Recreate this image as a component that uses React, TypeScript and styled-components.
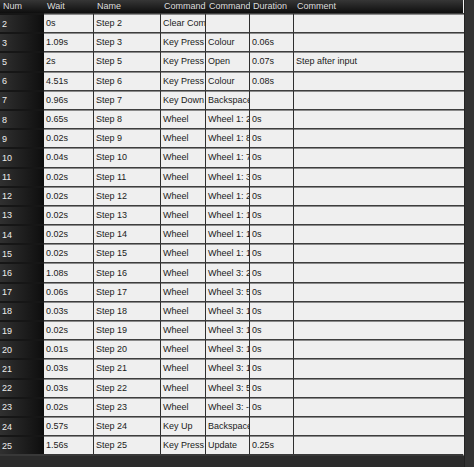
import React from 'react';
import styled, { createGlobalStyle } from 'styled-components';

const COLS = '44px 50px 67px 45px 44px 44px 170px';
const ROW_H = 19.2;

const GlobalStyle = createGlobalStyle`
  html, body {
    margin: 0;
    padding: 0;
    background: #2c2c2c;
  }
  body {
    font-family: 'Liberation Sans', Arial, sans-serif;
  }
`;

const Frame = styled.div`
  width: 474px;
  height: 467px;
  display: flex;
  background: #2b2b2b;
  overflow: hidden;
`;

const Table = styled.div`
  width: 464px;
  display: flex;
  flex-direction: column;
  border-right: 1px solid #f4f4f4;
  box-sizing: border-box;
  align-self: flex-start;
  border-bottom: 2px solid #383838;
`;

const Scroll = styled.div`
  flex: 1;
  background: #333;
  border-left: 1px solid #222;
`;

const HeaderRow = styled.div`
  display: grid;
  grid-template-columns: ${COLS};
  height: 13px;
  background: linear-gradient(#363636, #0e0e0e);
`;

const HeaderCell = styled.div`
  color: #dcdcdc;
  font-size: 9px;
  line-height: 13px;
  padding-left: 3px;
  white-space: nowrap;
  overflow: hidden;
`;

const Row = styled.div`
  display: grid;
  grid-template-columns: ${COLS};
  height: ${ROW_H}px;
`;

const NumCell = styled.div`
  color: #ececec;
  font-size: 9px;
  display: flex;
  align-items: center;
  padding-left: 2px;
  background: linear-gradient(to right, #303030, #131313 85%, #0c0c0c);
  border-top: 2px solid #161616;
`;

const Cell = styled.div<{ $last?: boolean }>`
  color: #1a1a1a;
  font-size: 9px;
  display: flex;
  align-items: center;
  padding-left: 2px;
  background: #efefef;
  white-space: nowrap;
  overflow: hidden;
  border-top: 1px solid #3e3e3e;
  box-shadow: inset 0 1px 0 #8a8a8a;
  border-right: ${({ $last }) => ($last ? 'none' : '1px solid #2e2e2e')};
  box-sizing: border-box;
`;

type Step = [string, string, string, string, string, string, string];

const wheel = (n: string, wait: string, val: string): Step => [
  n,
  wait,
  `Step ${n}`,
  'Wheel',
  `Wheel ${val}`,
  '0s',
  '',
];

const steps: Step[] = [
  ['2', '0s', 'Step 2', 'Clear Command', '', '', ''],
  ['3', '1.09s', 'Step 3', 'Key Press', 'Colour', '0.06s', ''],
  ['5', '2s', 'Step 5', 'Key Press', 'Open', '0.07s', 'Step after input'],
  ['6', '4.51s', 'Step 6', 'Key Press', 'Colour', '0.08s', ''],
  ['7', '0.96s', 'Step 7', 'Key Down', 'Backspace', '', ''],
  wheel('8', '0.65s', '1: 2'),
  wheel('9', '0.02s', '1: 8'),
  wheel('10', '0.04s', '1: 7'),
  wheel('11', '0.02s', '1: 3'),
  wheel('12', '0.02s', '1: 2'),
  wheel('13', '0.02s', '1: 1'),
  wheel('14', '0.02s', '1: 1'),
  wheel('15', '0.02s', '1: 1'),
  wheel('16', '1.08s', '3: 2'),
  wheel('17', '0.06s', '3: 5'),
  wheel('18', '0.03s', '3: 1'),
  wheel('19', '0.02s', '3: 1'),
  wheel('20', '0.01s', '3: 1'),
  wheel('21', '0.03s', '3: 1'),
  wheel('22', '0.03s', '3: 5'),
  wheel('23', '0.02s', '3: -1'),
  ['24', '0.57s', 'Step 24', 'Key Up', 'Backspace', '', ''],
  ['25', '1.56s', 'Step 25', 'Key Press', 'Update', '0.25s', ''],
];

const headers = ['Num', 'Wait', 'Name', 'Command', 'Command', 'Duration', 'Comment'];

export default function App() {
  return (
    <>
      <GlobalStyle />
      <Frame>
        <Table>
          <HeaderRow>
            {headers.map((h, i) => (
              <HeaderCell key={i}>{h}</HeaderCell>
            ))}
          </HeaderRow>
          {steps.map((s) => (
            <Row key={s[0]}>
              <NumCell>{s[0]}</NumCell>
              {s.slice(1).map((v, i) => (
                <Cell key={i} $last={i === 5}>
                  {v}
                </Cell>
              ))}
            </Row>
          ))}
        </Table>
        <Scroll />
      </Frame>
    </>
  );
}
